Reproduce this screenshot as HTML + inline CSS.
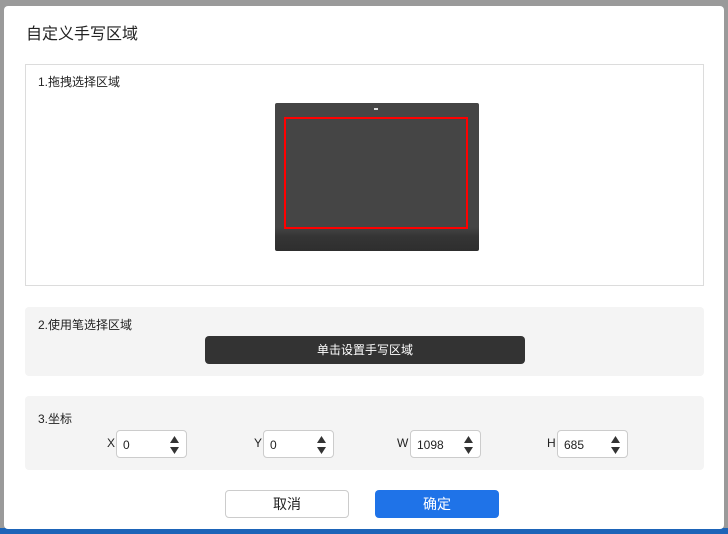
<!DOCTYPE html><html><head><meta charset="utf-8"><style>
*{box-sizing:border-box;margin:0;padding:0}
body{width:728px;height:534px;overflow:hidden;position:relative;background:#9a9a9a;font-family:"Liberation Sans","Noto Sans CJK SC",sans-serif;color:#222}
.abs{position:absolute}
.dlg{left:4px;top:6px;width:720px;height:523px;background:#fff;border-radius:4px}
.lbl{font-size:12px;color:#222}
.sec{background:#f4f4f4;border-radius:4px;left:25px;width:679px}
.inp{width:71px;height:28px;top:430px;background:#fff;border:1px solid #ccc;border-radius:4px;font-size:12px;padding:7px 0 0 6px}
.inp .ar{position:absolute;right:7px;top:5px;width:9px}
.xl{top:436px;font-size:12px}
.btn{top:490px;width:124px;height:28px;border-radius:4px;font-size:14px;text-align:center;line-height:26px}
</style></head><body>
<div class="abs" style="left:0;top:528px;width:728px;height:6px;background:#1d64b8"></div>
<div class="abs dlg"></div>
<div class="abs" style="left:26px;top:20px;font-size:16px;color:#222">自定义手写区域</div>
<div class="abs" style="left:25px;top:64px;width:679px;height:222px;border:1px solid #dcdcdc"></div>
<div class="abs lbl" style="left:38px;top:73px">1.拖拽选择区域</div>
<div class="abs" style="left:275px;top:103px;width:204px;height:148px;background:linear-gradient(#454545 0,#454545 84%,#353535 90%,#2e2e2e 100%);border-radius:2px"></div>
<div class="abs" style="left:374px;top:108px;width:4px;height:2px;background:#ddd"></div>
<div class="abs" style="left:284px;top:117px;width:184px;height:112px;border:2px solid #f00"></div>
<div class="abs sec" style="top:307px;height:69px"></div>
<div class="abs lbl" style="left:38px;top:316px">2.使用笔选择区域</div>
<div class="abs" style="left:205px;top:336px;width:320px;height:28px;background:#333;border-radius:4px;color:#fff;font-size:12px;text-align:center;line-height:28px">单击设置手写区域</div>
<div class="abs sec" style="top:396px;height:74px"></div>
<div class="abs lbl" style="left:38px;top:410px">3.坐标</div>
<div class="abs xl" style="left:107px">X</div>
<div class="abs xl" style="left:254px">Y</div>
<div class="abs xl" style="left:397px">W</div>
<div class="abs xl" style="left:547px">H</div>
<div class="abs inp" style="left:116px">0<svg class="ar" viewBox="0 0 9 18"><path d="M0 7L4.5 0L9 7Z M0 11L4.5 18L9 11Z" fill="#333"/></svg></div>
<div class="abs inp" style="left:263px">0<svg class="ar" viewBox="0 0 9 18"><path d="M0 7L4.5 0L9 7Z M0 11L4.5 18L9 11Z" fill="#333"/></svg></div>
<div class="abs inp" style="left:410px">1098<svg class="ar" viewBox="0 0 9 18"><path d="M0 7L4.5 0L9 7Z M0 11L4.5 18L9 11Z" fill="#333"/></svg></div>
<div class="abs inp" style="left:557px">685<svg class="ar" viewBox="0 0 9 18"><path d="M0 7L4.5 0L9 7Z M0 11L4.5 18L9 11Z" fill="#333"/></svg></div>
<div class="abs btn" style="left:225px;border:1px solid #ccc;background:#fff;color:#222">取消</div>
<div class="abs btn" style="left:375px;background:#1f73e8;color:#fff;line-height:28px">确定</div>
</body></html>
